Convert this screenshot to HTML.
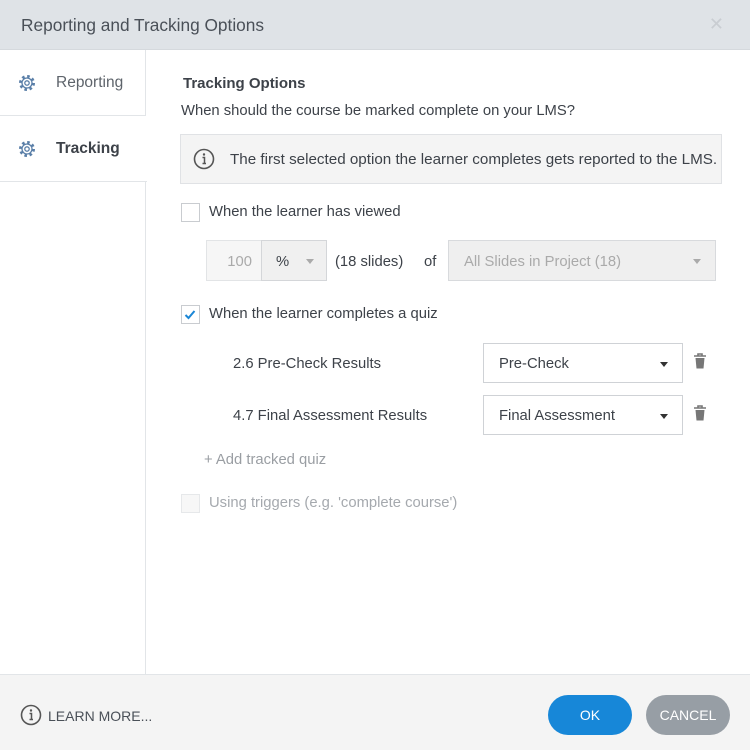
<!DOCTYPE html>
<html><head><style>
*{box-sizing:border-box;margin:0;padding:0}
body{width:750px;height:750px;background:#fff;font-family:"Liberation Sans",sans-serif;color:#3d4249;position:relative;overflow:hidden;font-size:14.8px}
.abs{position:absolute}
.hdr{left:0;top:0;width:750px;height:50px;background:#dfe3e7;border-bottom:1px solid #d5d9dd}
.hdr .t{left:21px;top:15px;font-size:17.3px;color:#4a5058}
.x{right:26px;top:14px;font-size:18px;color:#c9cdd2}
.side{left:0;top:50px;width:146px;height:624px;border-right:1px solid #e2e5e8}
.tab{left:0;width:146px;height:66px;border-bottom:1px solid #e2e5e8}
.tab span{position:absolute;left:56px;top:24px;font-size:15.5px}
.gear{position:absolute;left:17px;top:23px}
.foot{left:0;top:674px;width:750px;height:76px;background:#f4f4f4;border-top:1px solid #e2e5e8}
.cb{width:19px;height:19px;border:1px solid #c9ccd0;background:#fff}
.sel{height:40px;border:1px solid #cfd2d6;background:#fff}
.caret{position:absolute;width:0;height:0;border-left:4px solid transparent;border-right:4px solid transparent;border-top:5px solid #333}
.btn{height:40px;border-radius:20px;color:#fff;font-size:14px;text-align:center;line-height:40px}
</style></head><body>
<div class="abs hdr"><div class="abs t">Reporting and Tracking Options</div><div class="abs x">✕</div></div>
<div class="abs side"></div>
<div class="abs tab" style="top:50px;border-right:1px solid #e2e5e8"><svg class="gear" width="20" height="20" viewBox="0 0 20 20"><circle cx="10" cy="10" r="6.5" fill="none" stroke="#5a7fa8" stroke-width="3" stroke-dasharray="2.5 2.6"/><circle cx="10" cy="10" r="5" fill="#fff" stroke="#5a7fa8" stroke-width="1.3"/><circle cx="10" cy="10" r="2.2" fill="none" stroke="#5a7fa8" stroke-width="1.3"/></svg><span style="color:#5e646b">Reporting</span></div>
<div class="abs tab" style="top:116px;background:#fff;width:147px;z-index:2"><svg class="gear" width="20" height="20" viewBox="0 0 20 20"><circle cx="10" cy="10" r="6.5" fill="none" stroke="#5a7fa8" stroke-width="3" stroke-dasharray="2.5 2.6"/><circle cx="10" cy="10" r="5" fill="#fff" stroke="#5a7fa8" stroke-width="1.3"/><circle cx="10" cy="10" r="2.2" fill="none" stroke="#5a7fa8" stroke-width="1.3"/></svg><span style="font-weight:bold;color:#3d4249">Tracking</span></div>

<div class="abs" style="left:183px;top:75px;font-size:15px;font-weight:bold">Tracking Options</div>
<div class="abs" style="left:181px;top:103px">When should the course be marked complete on your LMS?</div>
<div class="abs" style="left:180px;top:134px;width:542px;height:50px;background:#f4f4f4;border:1px solid #e0e2e5"></div>
<svg class="abs" style="left:193px;top:148px" width="22" height="22" viewBox="0 0 22 22"><circle cx="11" cy="11" r="9.5" fill="none" stroke="#555" stroke-width="1.6"/><circle cx="11" cy="6.5" r="1.2" fill="#555"/><path d="M9.5 9.5h2v6M9.5 15.5h3.5" stroke="#555" stroke-width="1.5" fill="none"/></svg>
<div class="abs" style="left:230px;top:151px;font-size:15.2px">The first selected option the learner completes gets reported to the LMS.</div>

<div class="abs cb" style="left:181px;top:203px"></div>
<div class="abs" style="left:209px;top:204px">When the learner has viewed</div>
<div class="abs" style="left:206px;top:240px;width:56px;height:41px;background:#f6f6f6;border:1px solid #e2e4e6;color:#aaa;text-align:right;padding:13px 9px 0 0">100</div>
<div class="abs" style="left:261px;top:240px;width:66px;height:41px;background:#f0f0f0;border:1px solid #d4d6d9;padding:13px 0 0 14px">%<div class="caret" style="left:44px;top:18px;border-top-color:#aaa"></div></div>
<div class="abs" style="left:335px;top:254px">(18 slides)</div>
<div class="abs" style="left:424px;top:254px">of</div>
<div class="abs" style="left:448px;top:240px;width:268px;height:41px;background:#efefef;border:1px solid #d8dadd;color:#aaa;padding:13px 0 0 15px">All Slides in Project (18)<div class="caret" style="left:244px;top:18px;border-top-color:#aaa"></div></div>

<div class="abs cb" style="left:181px;top:305px"><svg width="17" height="17" viewBox="0 0 17 17"><path d="M3.5 9l3 3 6-7" stroke="#1a86d6" stroke-width="2" fill="none"/></svg></div>
<div class="abs" style="left:209px;top:306px">When the learner completes a quiz</div>

<div class="abs" style="left:233px;top:356px">2.6 Pre-Check Results</div>
<div class="abs sel" style="left:483px;top:343px;width:200px;padding:12px 0 0 15px">Pre-Check<div class="caret" style="left:176px;top:18px"></div></div>
<svg class="abs" style="left:693px;top:353px" width="14" height="16" viewBox="0 0 14 16"><path d="M1 3h12M5 3V1h4v2" stroke="#777" stroke-width="1.6" fill="none"/><path d="M2.5 5h9l-1 10.5h-7z" fill="#777"/></svg>
<div class="abs" style="left:233px;top:408px">4.7 Final Assessment Results</div>
<div class="abs sel" style="left:483px;top:395px;width:200px;padding:12px 0 0 15px">Final Assessment<div class="caret" style="left:176px;top:18px"></div></div>
<svg class="abs" style="left:693px;top:405px" width="14" height="16" viewBox="0 0 14 16"><path d="M1 3h12M5 3V1h4v2" stroke="#777" stroke-width="1.6" fill="none"/><path d="M2.5 5h9l-1 10.5h-7z" fill="#777"/></svg>

<div class="abs" style="left:204px;top:452px;color:#9a9ea3">+ Add tracked quiz</div>
<div class="abs cb" style="left:181px;top:494px;border-color:#e6e8ea;background:#f7f7f7"></div>
<div class="abs" style="left:209px;top:495px;color:#a5a9ae">Using triggers (e.g. 'complete course')</div>

<div class="abs foot"></div>
<svg class="abs" style="left:20px;top:704px" width="22" height="22" viewBox="0 0 22 22"><circle cx="11" cy="11" r="9.5" fill="none" stroke="#555" stroke-width="1.6"/><circle cx="11" cy="6.5" r="1.2" fill="#555"/><path d="M9.5 9.5h2v6M9.5 15.5h3.5" stroke="#555" stroke-width="1.5" fill="none"/></svg>
<div class="abs" style="left:48px;top:708px;color:#4a5058;font-size:14px">LEARN MORE...</div>
<div class="abs btn" style="left:548px;top:695px;width:84px;background:#1787d8">OK</div>
<div class="abs btn" style="left:646px;top:695px;width:84px;background:#979ea5">CANCEL</div>
</body></html>
